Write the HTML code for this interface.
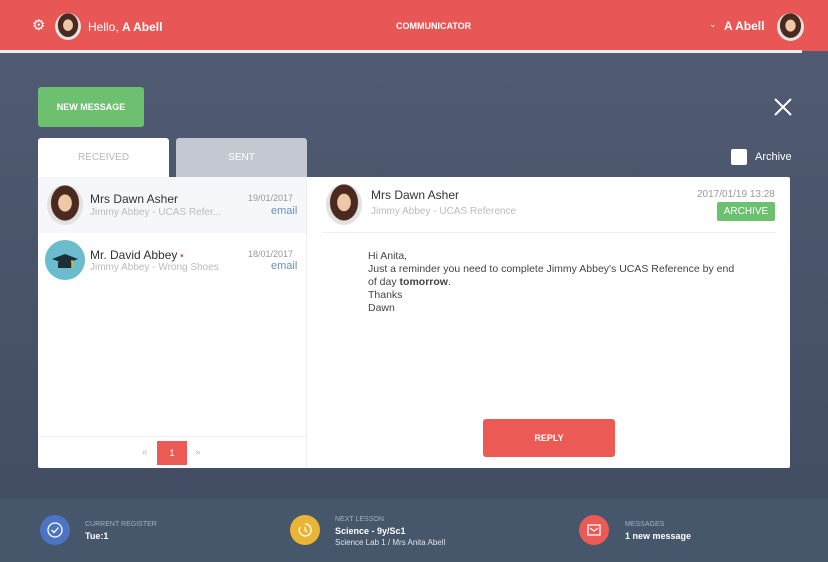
<!DOCTYPE html>
<html><head><meta charset="utf-8"><style>
*{margin:0;padding:0;box-sizing:border-box}
body{width:828px;height:562px;overflow:hidden;font-family:"Liberation Sans",sans-serif;background:linear-gradient(#525c74,#434e64 85%);position:relative}
.abs{position:absolute}
.hdr{left:0;top:0;width:828px;height:51px;background:#e85656}
.line{left:0;top:50px;width:802px;height:3px;background:#f4eeee}
.av{border-radius:50%;background:radial-gradient(ellipse 40% 45% at 50% 45%,#f0c8a8 0 45%,#4a2a20 50% 95%,#e4e2df 100%);background-color:#e4e2df}
.w{color:#fff}
.panel{left:38px;top:177px;width:752px;height:291px;background:#fff;border-radius:2px}
.foot{left:0;top:499px;width:828px;height:63px;background:#46566b}
.ic{width:30px;height:30px;border-radius:50%}
.fl{font-size:7px;color:#a7b1c0}
.fb{font-size:9px;color:#fff;font-weight:bold}
</style></head><body>
<div class="abs hdr"></div>
<div class="abs line"></div>
<div class="abs w" style="left:32px;top:16px;font-size:15px">⚙</div>
<div class="abs av" style="left:55px;top:13px;width:26px;height:27px"></div>
<div class="abs w" style="left:88px;top:20px;font-size:12px">Hello, <b>A Abell</b></div>
<div class="abs w" style="left:396px;top:21px;font-size:9px;font-weight:bold">COMMUNICATOR</div>
<div class="abs w" style="left:709px;top:19px;font-size:9px">⌄</div>
<div class="abs w" style="left:724px;top:19px;font-size:12px;font-weight:bold">A Abell</div>
<div class="abs av" style="left:777px;top:13px;width:27px;height:28px"></div>

<div class="abs w" style="left:38px;top:87px;width:106px;height:40px;background:#6dc06f;border-radius:3px;font-size:9px;font-weight:bold;text-align:center;line-height:40px">NEW MESSAGE</div>
<svg class="abs" style="left:774px;top:98px" width="18" height="18"><path d="M1 1L17 17M17 1L1 17" stroke="#fff" stroke-width="2"/></svg>
<div class="abs" style="left:38px;top:138px;width:131px;height:40px;background:#fff;border-radius:3px 3px 0 0;color:#b5b9c0;font-size:10px;text-align:center;line-height:40px">RECEIVED</div>
<div class="abs w" style="left:176px;top:138px;width:131px;height:39px;background:#c3c8d1;border-radius:3px 3px 0 0;font-size:10px;text-align:center;line-height:39px">SENT</div>
<div class="abs" style="left:731px;top:149px;width:16px;height:16px;background:#fff;border-radius:2px"></div>
<div class="abs w" style="left:755px;top:151px;font-size:11px">Archive</div>

<div class="abs panel"></div>
<div class="abs" style="left:38px;top:177px;width:268px;height:56px;background:#f5f7fa"></div>
<div class="abs" style="left:306px;top:177px;width:1px;height:291px;background:#eceef1"></div>
<div class="abs" style="left:38px;top:436px;width:268px;height:1px;background:#eceef1"></div>
<div class="abs av" style="left:47px;top:185px;width:36px;height:40px"></div>
<div class="abs" style="left:90px;top:192px;font-size:12px;color:#333">Mrs Dawn Asher</div>
<div class="abs" style="left:90px;top:207px;font-size:10px;color:#bbb">Jimmy Abbey - UCAS Refer...</div>
<div class="abs" style="left:248px;top:193px;font-size:9px;color:#999">19/01/2017</div>
<div class="abs" style="left:271px;top:205px;font-size:11px;color:#6b8fbf">email</div>
<div class="abs" style="left:45px;top:240px;width:40px;height:40px;border-radius:50%;background:#6bbccc"></div>
<svg class="abs" style="left:50px;top:252px" width="30" height="18"><path d="M2 7L15 2L28 7L15 12Z" fill="#1f2f3a"/><path d="M8 10v6h14v-6" fill="#1f2f3a"/><path d="M22 8v8" stroke="#e8b838" stroke-width="1.5"/></svg>
<div class="abs" style="left:90px;top:248px;font-size:12px;color:#333">Mr. David Abbey<span style="color:#e05050;font-size:10px"> •</span></div>
<div class="abs" style="left:90px;top:262px;font-size:10px;color:#bbb">Jimmy Abbey - Wrong Shoes</div>
<div class="abs" style="left:248px;top:249px;font-size:9px;color:#999">18/01/2017</div>
<div class="abs" style="left:271px;top:260px;font-size:11px;color:#6b8fbf">email</div>
<div class="abs" style="left:142px;top:447px;font-size:10px;color:#bbb">«</div>
<div class="abs w" style="left:157px;top:441px;width:30px;height:24px;background:#ec5a55;font-size:9px;text-align:center;line-height:24px">1</div>
<div class="abs" style="left:195px;top:447px;font-size:10px;color:#bbb">»</div>

<div class="abs av" style="left:326px;top:184px;width:36px;height:41px"></div>
<div class="abs" style="left:371px;top:188px;font-size:12px;color:#333">Mrs Dawn Asher</div>
<div class="abs" style="left:371px;top:206px;font-size:10px;color:#bbb">Jimmy Abbey - UCAS Reference</div>
<div class="abs" style="left:697px;top:189px;font-size:10px;color:#999">2017/01/19 13:28</div>
<div class="abs w" style="left:717px;top:202px;width:58px;height:19px;background:#6dc06f;border-radius:2px;font-size:10px;text-align:center;line-height:19px">ARCHIVE</div>
<div class="abs" style="left:322px;top:232px;width:454px;height:1px;background:#eef0f2"></div>
<div class="abs" style="left:368px;top:250px;font-size:10.5px;color:#444;line-height:13px">Hi Anita,<br>Just a reminder you need to complete Jimmy Abbey's UCAS Reference by end<br>of day <b>tomorrow</b>.<br>Thanks<br>Dawn</div>
<div class="abs w" style="left:483px;top:419px;width:132px;height:38px;background:#ec5a55;border-radius:3px;font-size:9px;font-weight:bold;text-align:center;line-height:38px">REPLY</div>

<div class="abs foot"></div>
<div class="abs ic" style="left:40px;top:515px;background:#4d74c4"></div>
<svg class="abs" style="left:46px;top:521px" width="18" height="18"><circle cx="9" cy="9" r="7" fill="none" stroke="#fff" stroke-width="1.3"/><path d="M5.5 9l2.5 2.5 4.5-5" fill="none" stroke="#fff" stroke-width="1.3"/></svg>
<div class="abs fl" style="left:85px;top:521px">CURRENT REGISTER</div>
<div class="abs fb" style="left:85px;top:531px">Tue:1</div>
<div class="abs ic" style="left:290px;top:515px;background:#e8b534"></div>
<svg class="abs" style="left:297px;top:522px" width="16" height="16"><path d="M8 2a6 6 0 1 1-5 3" fill="none" stroke="#fff" stroke-width="1.3"/><path d="M8 5v3l2 2" stroke="#fff" stroke-width="1.3" fill="none"/></svg>
<div class="abs fl" style="left:335px;top:516px">NEXT LESSON</div>
<div class="abs fb" style="left:335px;top:526px">Science - 9y/Sc1</div>
<div class="abs" style="left:335px;top:538px;font-size:8px;color:#dfe4ea">Science Lab 1 / Mrs Anita Abell</div>
<div class="abs ic" style="left:579px;top:515px;background:#ec5a55"></div>
<svg class="abs" style="left:587px;top:523px" width="14" height="14"><rect x="1" y="2" width="12" height="10" fill="none" stroke="#fff" stroke-width="1.3"/><path d="M3 5l4 3 4-3" fill="none" stroke="#fff" stroke-width="1.2"/></svg>
<div class="abs fl" style="left:625px;top:521px">MESSAGES</div>
<div class="abs fb" style="left:625px;top:531px">1 new message</div>
</body></html>
